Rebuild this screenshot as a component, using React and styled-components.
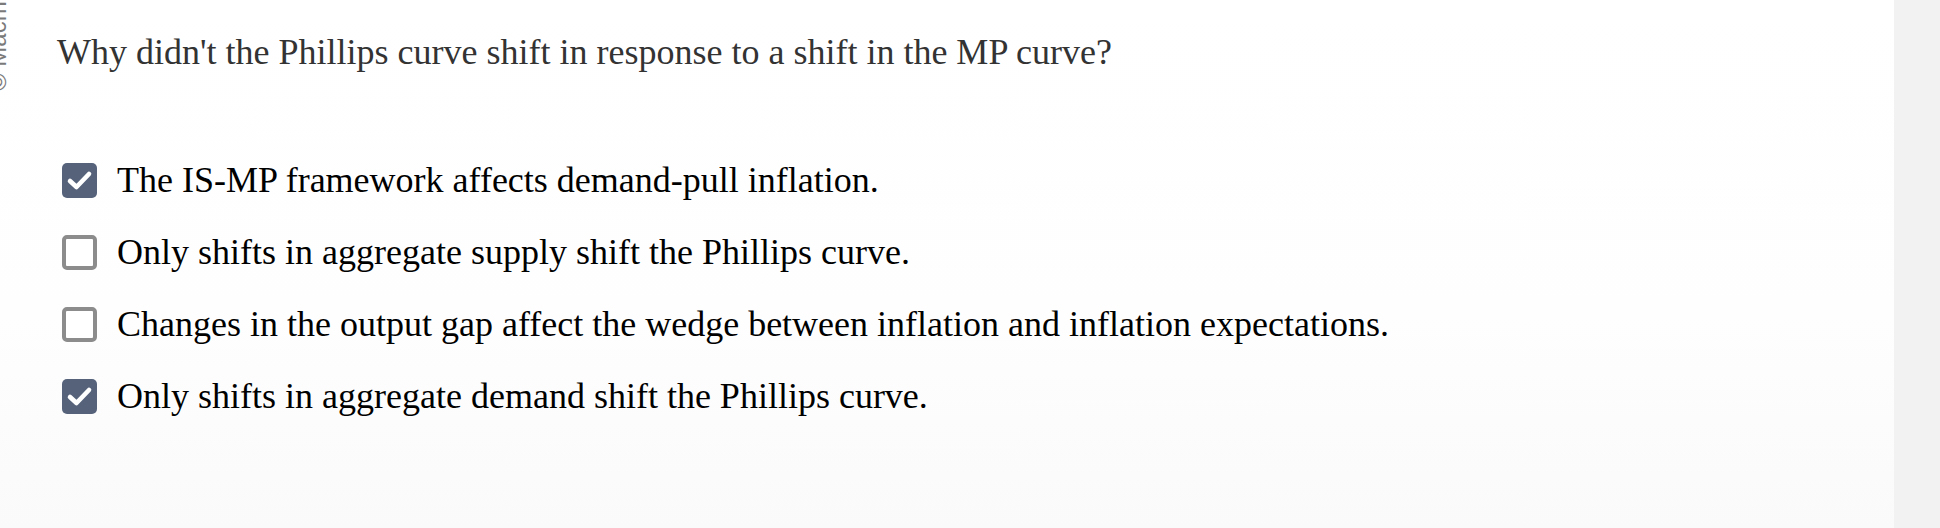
import React, { useState } from "react";
import styled, { createGlobalStyle } from "styled-components";

const GlobalStyle = createGlobalStyle`
  html, body {
    margin: 0;
    padding: 0;
    height: 100%;
  }
  body {
    font-family: "Liberation Serif", "Times New Roman", serif;
    background: #ffffff;
  }
  #root {
    height: 100%;
  }
`;

// Whole window: question panel plus the narrow grey gutter on the right
const Page = styled.div`
  display: flex;
  width: 100%;
  height: 528px;
  overflow: hidden;
`;

const Panel = styled.div`
  position: relative;
  flex: 1;
  padding: 31px 0 0 57px;
  background: linear-gradient(#ffffff 0%, #fefefe 60%, #fafafa 100%);
`;

const Gutter = styled.div`
  width: 46px;
  background: #f2f2f2;
`;

// Copyright line running up the left edge, mostly cut off
const Copyright = styled.div`
  position: absolute;
  left: -14px;
  top: 91px;
  transform: rotate(-90deg);
  transform-origin: left top;
  font-family: "Liberation Sans", Arial, sans-serif;
  font-size: 24px;
  line-height: 24px;
  color: #7a7a7a;
  white-space: nowrap;
`;

const Question = styled.p`
  margin: 0;
  font-size: 36px;
  line-height: 1.2;
  color: #333333;
`;

const Options = styled.div`
  display: flex;
  flex-direction: column;
  gap: 16px;
  margin-top: 78px;
`;

const Option = styled.label`
  display: flex;
  align-items: center;
  gap: 20px;
  height: 56px;
  padding-left: 5px;
  cursor: pointer;
`;

const Box = styled.span`
  box-sizing: border-box;
  display: flex;
  align-items: center;
  justify-content: center;
  flex: none;
  width: 35px;
  height: 35px;
  border-radius: 5px;
  border: ${({ $checked }) => ($checked ? "none" : "4px solid #8c8c8c")};
  background: ${({ $checked }) => ($checked ? "#55627a" : "#ffffff")};
`;

const Label = styled.span`
  font-size: 36px;
  line-height: 1.2;
  color: #000000;
`;

const Check = () => (
  <svg width="27" height="21" viewBox="0 0 27 21">
    <path
      d="M4 11 L10.5 17 L23 4"
      fill="none"
      stroke="#ffffff"
      strokeWidth="4.6"
      strokeLinecap="round"
      strokeLinejoin="round"
    />
  </svg>
);

const choices = [
  "The IS-MP framework affects demand-pull inflation.",
  "Only shifts in aggregate supply shift the Phillips curve.",
  "Changes in the output gap affect the wedge between inflation and inflation expectations.",
  "Only shifts in aggregate demand shift the Phillips curve.",
];

const App = () => {
  const [picked, setPicked] = useState([true, false, false, true]);

  const toggle = (i) =>
    setPicked((prev) => prev.map((v, j) => (j === i ? !v : v)));

  return (
    <>
      <GlobalStyle />
      <Page>
        <Panel>
          <Copyright>© Macmillan Learning</Copyright>
          <Question>
            Why didn't the Phillips curve shift in response to a shift in the MP curve?
          </Question>
          <Options>
            {choices.map((text, i) => (
              <Option key={i} onClick={() => toggle(i)}>
                <Box $checked={picked[i]}>{picked[i] && <Check />}</Box>
                <Label>{text}</Label>
              </Option>
            ))}
          </Options>
        </Panel>
        <Gutter />
      </Page>
    </>
  );
};

export default App;
